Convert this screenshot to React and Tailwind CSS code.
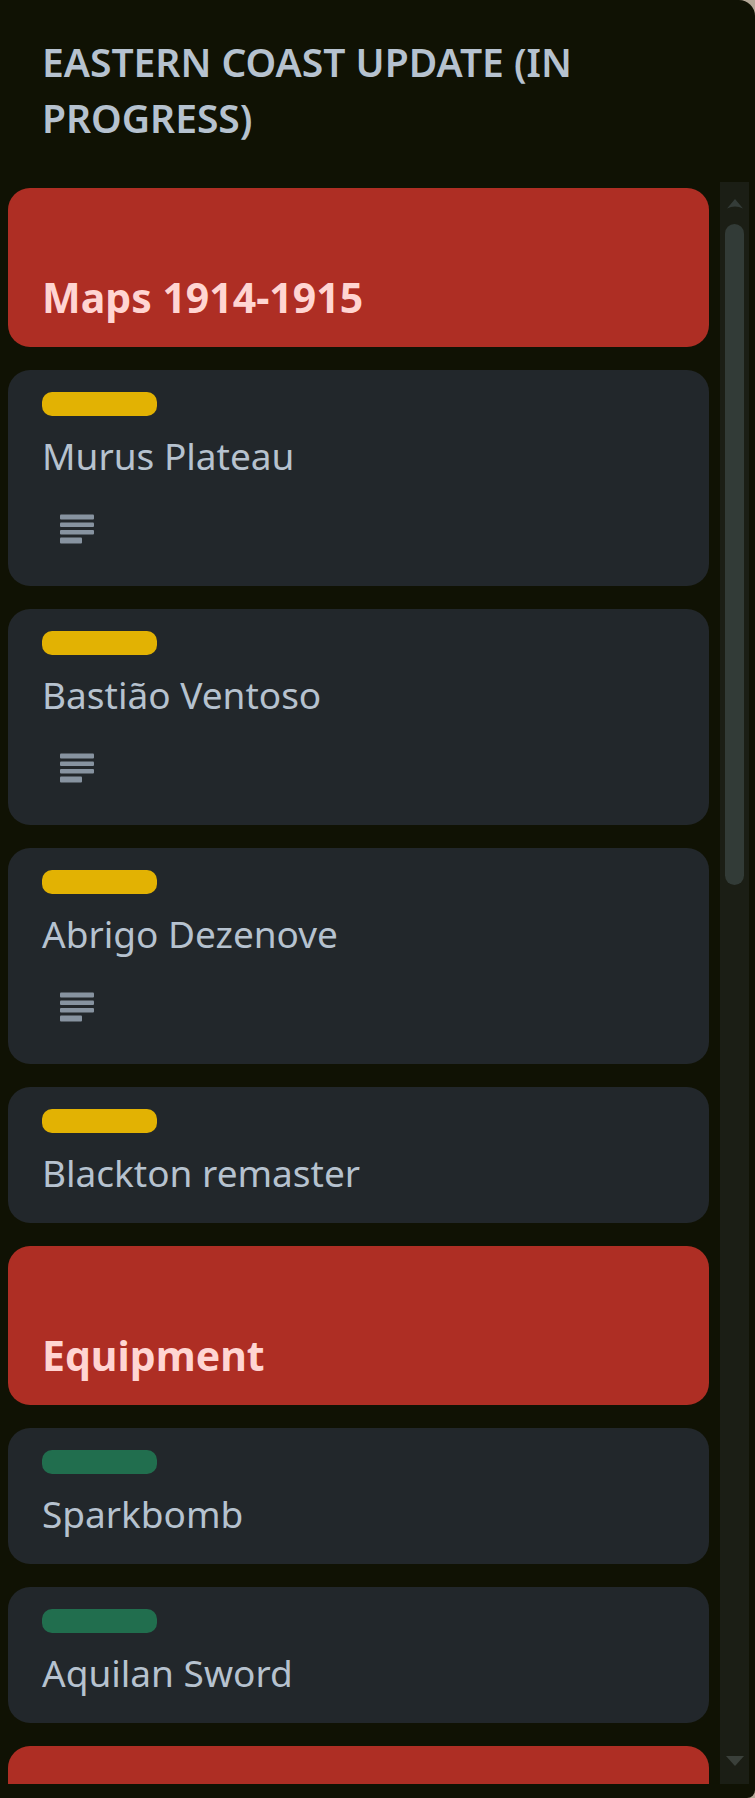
const ITEMS = [
  { id: 1, kind: "section", title: "Maps 1914-1915" },
  { id: 2, kind: "card", title: "Murus Plateau", color: "yellow", description: true },
  { id: 3, kind: "card", title: "Bastião Ventoso", color: "yellow", description: true },
  { id: 4, kind: "card", title: "Abrigo Dezenove", color: "yellow", description: true },
  { id: 5, kind: "card", title: "Blackton remaster", color: "yellow" },
  { id: 6, kind: "section", title: "Equipment" },
  { id: 7, kind: "card", title: "Sparkbomb", color: "green" },
  { id: 8, kind: "card", title: "Aquilan Sword", color: "green" },
  { id: 9, kind: "section", title: "" },
];

const LABEL_COLORS = {
  yellow: "bg-[#e2b203]",
  green: "bg-[#216e4e]",
};

function DescriptionIcon() {
  return (
    <svg viewBox="0 0 34 30" className="block h-[30px] w-[34px] fill-[#8793a0]" aria-hidden="true">
      <rect x="0" y="0.5" width="34" height="5" rx="1" />
      <rect x="0" y="8.5" width="34" height="4.5" rx="1" />
      <rect x="0" y="16" width="34" height="4.5" rx="1" />
      <rect x="0" y="23.5" width="22" height="6" rx="1" />
    </svg>
  );
}

function SectionCard({ title }) {
  return (
    <li className="flex h-[159px] shrink-0 items-end rounded-[22px] bg-[#ae2e24] px-[34px] pb-[22px]">
      {title && <h3 className="text-[41px] leading-[56px] font-bold text-[#ffd5d2]">{title}</h3>}
    </li>
  );
}

function Card({ title, color, description }) {
  return (
    <li className="shrink-0 rounded-[22px] bg-[#22272b] px-[34px] pt-[22px] pb-[22px]">
      <div className={`h-6 w-[115px] rounded-[10px] ${LABEL_COLORS[color]}`} />
      <h3 className="mt-3 text-[37px] leading-[56px] text-[#b6c2cf]">{title}</h3>
      {description && (
        <div className="h-20 pt-[30px] pl-[18px]">
          <DescriptionIcon />
        </div>
      )}
    </li>
  );
}

function Scrollbar() {
  return (
    <div className="flex w-[29px] shrink-0 flex-col items-center bg-[#1b1e15]" aria-hidden="true">
      <svg viewBox="0 0 18 10" className="mt-[17px] h-[10px] w-[18px] shrink-0 fill-[#343c38]">
        <path d="M1 9.5 L9 0 L17 9.5 Q9 5.5 1 9.5 Z" />
      </svg>
      <div className="mt-[15px] mb-auto h-33/80 w-[19px] rounded-full bg-[#323b37]" />
      <svg viewBox="0 0 18 10" className="mb-[18px] h-[10px] w-[18px] shrink-0 fill-[#3a403a]">
        <path d="M0 0 H18 L9 10 Z" />
      </svg>
    </div>
  );
}

export default function App() {
  return (
    <div className="h-screen bg-[#b5a898] font-['Noto_Sans','Open_Sans',sans-serif]">
      <section className="flex h-full flex-col overflow-hidden rounded-tr-2xl rounded-br-lg bg-[#101204] pb-[14px]">
        <h2 className="pt-[34px] pr-36 pb-9 pl-[42px] text-[39px] leading-[56px] font-semibold text-[#b6c2cf]">
          EASTERN COAST UPDATE (IN PROGRESS)
        </h2>
        <div className="flex min-h-0 flex-1 gap-[11px] pr-[6px] pl-2">
          <ul className="flex min-w-0 flex-1 flex-col gap-[23px] overflow-hidden pt-[6px]">
            {ITEMS.map((item) =>
              item.kind === "section" ? (
                <SectionCard key={item.id} title={item.title} />
              ) : (
                <Card key={item.id} {...item} />
              )
            )}
          </ul>
          <Scrollbar />
        </div>
      </section>
    </div>
  );
}
